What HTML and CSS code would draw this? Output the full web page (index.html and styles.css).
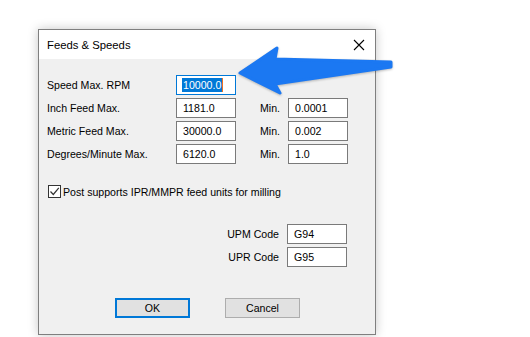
FILE: index.html
```html
<!DOCTYPE html>
<html>
<head>
<meta charset="utf-8">
<link rel="stylesheet" href="styles.css">
</head>
<body>
<div class="dialog">
  <div class="titlebar">
    <span class="title">Feeds &amp; Speeds</span>
    <svg class="close" width="12" height="12" viewBox="0 0 12 12"><path d="M1 1 L11 11 M11 1 L1 11" stroke="#000" stroke-width="1.1" fill="none"/></svg>
  </div>
  <div class="body">
    <div class="grid">
      <div class="label">Speed Max. RPM</div>
      <div class="field focused"><span class="sel">10000.0</span><span class="caret"></span></div>
      <div></div><div></div>

      <div class="label">Inch Feed Max.</div>
      <div class="field">1181.0</div>
      <div class="label min">Min.</div>
      <div class="field">0.0001</div>

      <div class="label">Metric Feed Max.</div>
      <div class="field">30000.0</div>
      <div class="label min">Min.</div>
      <div class="field">0.002</div>

      <div class="label">Degrees/Minute Max.</div>
      <div class="field">6120.0</div>
      <div class="label min">Min.</div>
      <div class="field">1.0</div>
    </div>

    <div class="check-row">
      <span class="checkbox"><svg width="11" height="11" viewBox="0 0 11 11"><path d="M1.5 5.5 L4.3 8.5 L9.8 1.8" stroke="#333" stroke-width="1.2" fill="none"/></svg></span>
      <span class="check-label">Post supports IPR/MMPR feed units for milling</span>
    </div>

    <div class="codes">
      <div class="code-label">UPM Code</div>
      <div class="field">G94</div>
      <div class="code-label">UPR Code</div>
      <div class="field">G95</div>
    </div>

    <div class="buttons">
      <div class="btn default">OK</div>
      <div class="btn">Cancel</div>
    </div>
  </div>
</div>

<svg class="arrow" width="530" height="337" viewBox="0 0 530 337">
  <polygon points="240,73 277,48 275,59 391,62 391,67 275,84 280,93" fill="#1b78f2" stroke="#1b78f2" stroke-width="3" stroke-linejoin="round"/>
</svg>
</body>
</html>
```

FILE: styles.css
```css
html, body {
  margin: 0;
  padding: 0;
  background: #ffffff;
  width: 530px;
  height: 337px;
  overflow: hidden;
}

body {
  font-family: "Liberation Sans", Arial, sans-serif;
  font-size: 10.6px;
  color: #000;
  position: relative;
}

.dialog {
  box-sizing: border-box;
  margin-left: 38px;
  margin-top: 29px;
  width: 338px;
  height: 306px;
  border: 1px solid #7f7f7f;
  background: #f0f0f0;
  box-shadow: 0 0 10px rgba(0, 0, 0, 0.22);
  display: flex;
  flex-direction: column;
}

.titlebar {
  height: 29px;
  background: #ffffff;
  display: flex;
  align-items: center;
  justify-content: space-between;
  padding: 0 10px 0 8px;
  flex: none;
}

.title {
  font-size: 11.3px;
}

.close {
  display: block;
}

.body {
  padding: 16px 0 0 8px;
  display: flex;
  flex-direction: column;
}

.grid {
  display: grid;
  grid-template-columns: 129px 60px 52px 60px;
  grid-auto-rows: 20px;
  row-gap: 3px;
}

.label {
  display: flex;
  align-items: center;
  white-space: nowrap;
}

.min {
  padding-left: 24px;
}

.field {
  box-sizing: border-box;
  height: 20px;
  background: #fff;
  border: 1px solid #7a7a7a;
  display: flex;
  align-items: center;
  padding-left: 6px;
  white-space: nowrap;
}

.field.focused {
  border-color: #0078d7;
  padding-left: 5px;
}

.sel {
  background: #0078d7;
  color: #fff;
  padding: 0 1px;
  line-height: 14px;
}

.caret {
  width: 1px;
  height: 14px;
  background: #f07020;
}

.check-row {
  display: flex;
  align-items: center;
  margin-top: 21px;
  margin-left: 1px;
  gap: 2px;
}

.checkbox {
  box-sizing: border-box;
  width: 13px;
  height: 13px;
  border: 1px solid #333;
  background: #fff;
  display: flex;
  align-items: center;
  justify-content: center;
}

.checkbox svg {
  display: block;
}

.codes {
  display: grid;
  grid-template-columns: 240px 60px;
  grid-auto-rows: 20px;
  row-gap: 3px;
  margin-top: 26px;
}

.code-label {
  display: flex;
  align-items: center;
  justify-content: flex-end;
  padding-right: 8px;
}

.buttons {
  display: flex;
  margin-top: 31px;
  margin-left: 68px;
  gap: 35px;
}

.btn {
  box-sizing: border-box;
  width: 75px;
  height: 20px;
  background: #e1e1e1;
  border: 1px solid #adadad;
  display: flex;
  align-items: center;
  justify-content: center;
}

.btn.default {
  border: 2px solid #0078d7;
}

.arrow {
  position: absolute;
  left: 0;
  top: 0;
  pointer-events: none;
  filter: drop-shadow(0 1px 1px rgba(0, 0, 0, 0.25));
}
```
